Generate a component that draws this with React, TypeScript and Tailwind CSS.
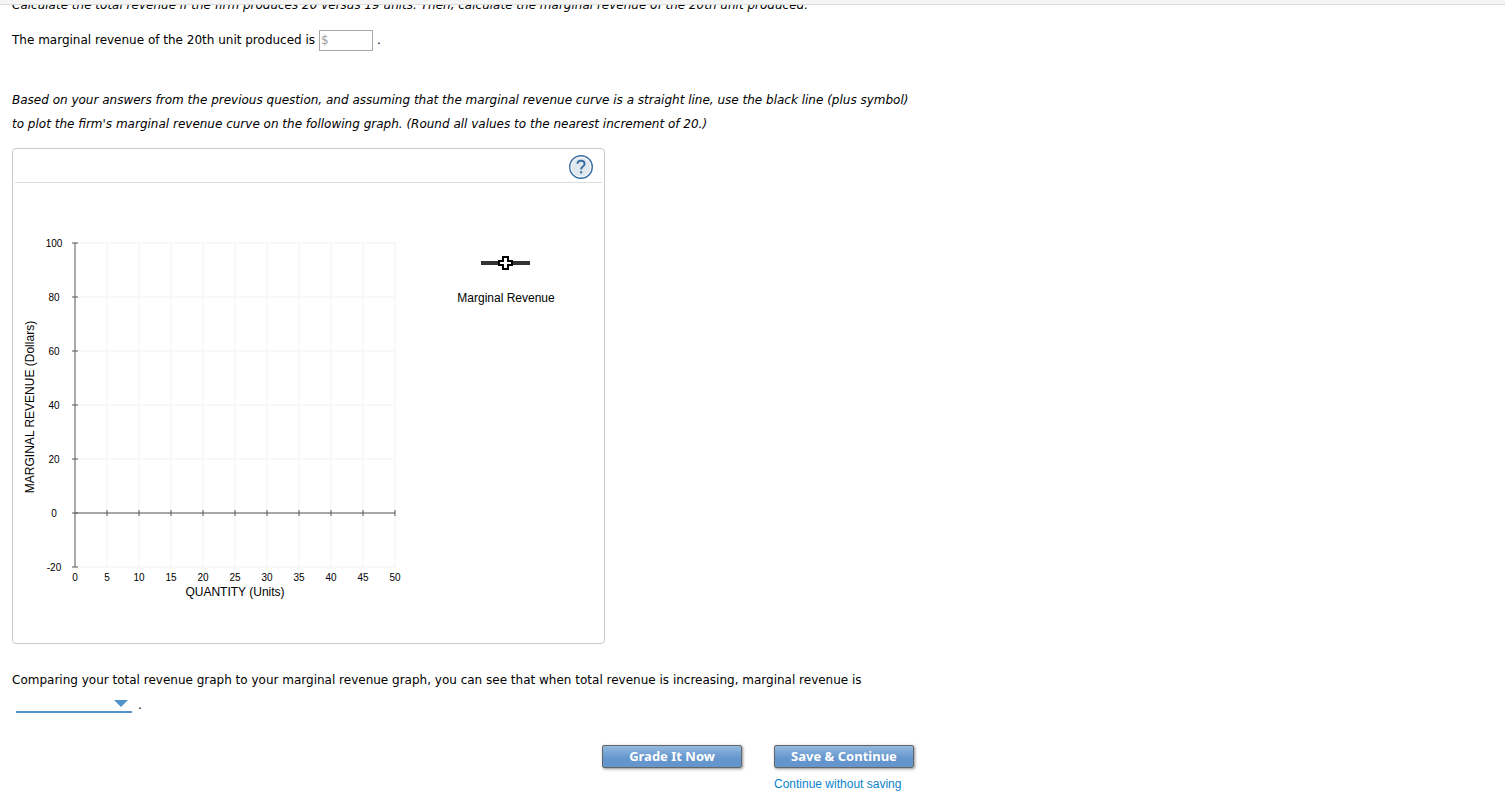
import React from "react";

const PLOT_LEFT = 62;
const PLOT_TOP = 60;
const X_STEP = 32;
const Y_STEP = 54;
const X_TICKS = [0, 5, 10, 15, 20, 25, 30, 35, 40, 45, 50];
const Y_TICKS = [100, 80, 60, 40, 20, 0, -20];
const PLOT_RIGHT = PLOT_LEFT + X_STEP * (X_TICKS.length - 1);
const PLOT_BOTTOM = PLOT_TOP + Y_STEP * (Y_TICKS.length - 1);
const ZERO_Y = PLOT_TOP + Y_STEP * Y_TICKS.indexOf(0);

function RevenueChart() {
  return (
    <svg
      viewBox="0 0 591 460"
      className="block w-full font-['Liberation_Sans',Arial,sans-serif]"
      role="img"
      aria-label="Marginal revenue graph"
    >
      <g stroke="#f8f8f8" strokeWidth="2">
        {X_TICKS.slice(1).map((t, i) => {
          const x = PLOT_LEFT + X_STEP * (i + 1);
          return <line key={t} x1={x} x2={x} y1={PLOT_TOP} y2={PLOT_BOTTOM} />;
        })}
        {Y_TICKS.map((t, i) => {
          const y = PLOT_TOP + Y_STEP * i;
          return <line key={t} x1={PLOT_LEFT} x2={PLOT_RIGHT + 1} y1={y} y2={y} />;
        })}
      </g>
      <g stroke="#555" strokeOpacity="0.5" strokeWidth="2">
        <line x1={PLOT_LEFT} x2={PLOT_LEFT} y1={PLOT_TOP} y2={PLOT_BOTTOM} />
        <line x1={PLOT_LEFT} x2={PLOT_RIGHT} y1={ZERO_Y} y2={ZERO_Y} />
        {X_TICKS.slice(1).map((t, i) => {
          const x = PLOT_LEFT + X_STEP * (i + 1);
          return <line key={t} x1={x} x2={x} y1={ZERO_Y - 3} y2={ZERO_Y + 3} />;
        })}
        {Y_TICKS.map((t, i) => {
          const y = PLOT_TOP + Y_STEP * i;
          return <line key={t} x1={PLOT_LEFT - 3} x2={PLOT_LEFT + 3} y1={y} y2={y} />;
        })}
      </g>
      <g fontSize="10" textAnchor="middle" fill="#000">
        {X_TICKS.map((t, i) => (
          <text key={t} x={PLOT_LEFT + X_STEP * i} y={PLOT_BOTTOM + 14}>
            {t}
          </text>
        ))}
        {Y_TICKS.map((t, i) => (
          <text key={t} x="41" y={PLOT_TOP + Y_STEP * i + 4}>
            {t}
          </text>
        ))}
      </g>
      <g fontSize="12" textAnchor="middle" fill="#000">
        <text x="222" y="413">QUANTITY (Units)</text>
        <text transform="translate(21 224) rotate(-90)">MARGINAL REVENUE (Dollars)</text>
        <text x="493" y="119">Marginal Revenue</text>
      </g>
      <line x1="468" x2="517" y1="80" y2="80" stroke="#333" strokeWidth="4" />
      <path
        d="M490 74h5v4h4v4h-4v4h-5v-4h-4v-4h4z"
        fill="#fff"
        stroke="#000"
        strokeWidth="2"
      />
    </svg>
  );
}

function ActionButton({ children }: { children: React.ReactNode }) {
  return (
    <button
      type="button"
      className="h-[23px] w-[140px] rounded-[2px] border border-[#666] bg-linear-to-b from-[#93b9de] to-[#6495cc] to-60% text-center font-['Noto_Sans',sans-serif] text-[13px] leading-[21px] font-bold text-white shadow-[1px_1px_3px_rgba(0,0,0,0.45)]"
    >
      {children}
    </button>
  );
}

export default function App() {
  return (
    <div className="bg-white font-['DejaVu_Sans',Verdana,sans-serif] text-xs leading-6 text-black">
      <header className="h-[5px] border-b border-[#ddd] bg-[#f5f5f5]" />
      <main className="px-3">
        <div className="flex h-3 flex-col justify-end overflow-hidden">
          <p className="whitespace-nowrap italic">
            Calculate the total revenue if the firm produces 20 versus 19 units. Then, calculate the
            marginal revenue of the 20th unit produced.
          </p>
        </div>

        <div className="mt-[11px] flex items-center whitespace-nowrap">
          <label htmlFor="marginal-revenue">The marginal revenue of the 20th unit produced is</label>
          <input
            id="marginal-revenue"
            type="text"
            placeholder="$"
            className="ml-1 h-[21px] w-[54px] border border-[#a9a9a9] px-px text-xs leading-[19px] outline-none placeholder:text-[#a0a0a8]"
          />
          <span className="ml-1">.</span>
        </div>

        <p className="mt-9 whitespace-nowrap italic">
          Based on your answers from the previous question, and assuming that the marginal revenue
          curve is a straight line, use the black line (plus symbol)
          <br />
          to plot the firm's marginal revenue curve on the following graph. (Round all values to the
          nearest increment of 20.)
        </p>

        <section className="mt-3 max-w-[593px] rounded border border-[#ccc]">
          <div className="mx-0.5 flex h-[34px] items-center justify-end border-b border-[#ddd] pr-[9px]">
            <button type="button" aria-label="Help" className="mt-0.5 block">
              <svg width="24" height="24" viewBox="0 0 24 24">
                <circle cx="12" cy="12" r="11.3" fill="#fff" stroke="#3a6ea5" strokeWidth="1.4" />
                <circle cx="12" cy="12" r="9.6" fill="#dfe7ef" />
                <path
                  d="M8.4 8.8C8.5 6.8 10 5.8 12 5.8c2.2 0 3.6 1.2 3.6 3 0 1.5-.9 2.2-2 3-1.1.8-1.5 1.3-1.5 2.7"
                  fill="none"
                  stroke="#3a6ea5"
                  strokeWidth="1.9"
                />
                <rect x="11.1" y="16.2" width="2" height="2.2" fill="#3a6ea5" />
              </svg>
            </button>
          </div>
          <RevenueChart />
        </section>

        <div className="mt-6 whitespace-nowrap">
          <label htmlFor="direction">
            Comparing your total revenue graph to your marginal revenue graph, you can see that when
            total revenue is increasing, marginal revenue is
          </label>
          <div className="ml-1 flex h-[21px] items-end">
            <div className="relative">
              <select
                id="direction"
                defaultValue=""
                className="block h-[18px] w-[116px] appearance-none border-b-2 border-[#5093cb] bg-transparent pr-5 text-xs outline-none"
              >
                <option value="" />
                <option value="positive">positive</option>
                <option value="negative">negative</option>
              </select>
              <svg
                className="pointer-events-none absolute top-[5px] right-1"
                width="14"
                height="7"
                viewBox="0 0 14 7"
              >
                <path d="M0 0h14L7 7z" fill="#5093cb" />
              </svg>
            </div>
            <span className="ml-1.5 leading-4">.</span>
          </div>
        </div>

        <div className="mt-8 flex max-w-[902px] items-start justify-end gap-8">
          <ActionButton>Grade It Now</ActionButton>
          <div className="flex flex-col items-start">
            <ActionButton>Save &amp; Continue</ActionButton>
            <a
              href="#"
              className="mt-2 font-['Liberation_Sans',Arial,sans-serif] text-xs leading-4 text-[#0a82cc]"
            >
              Continue without saving
            </a>
          </div>
        </div>
      </main>
    </div>
  );
}
